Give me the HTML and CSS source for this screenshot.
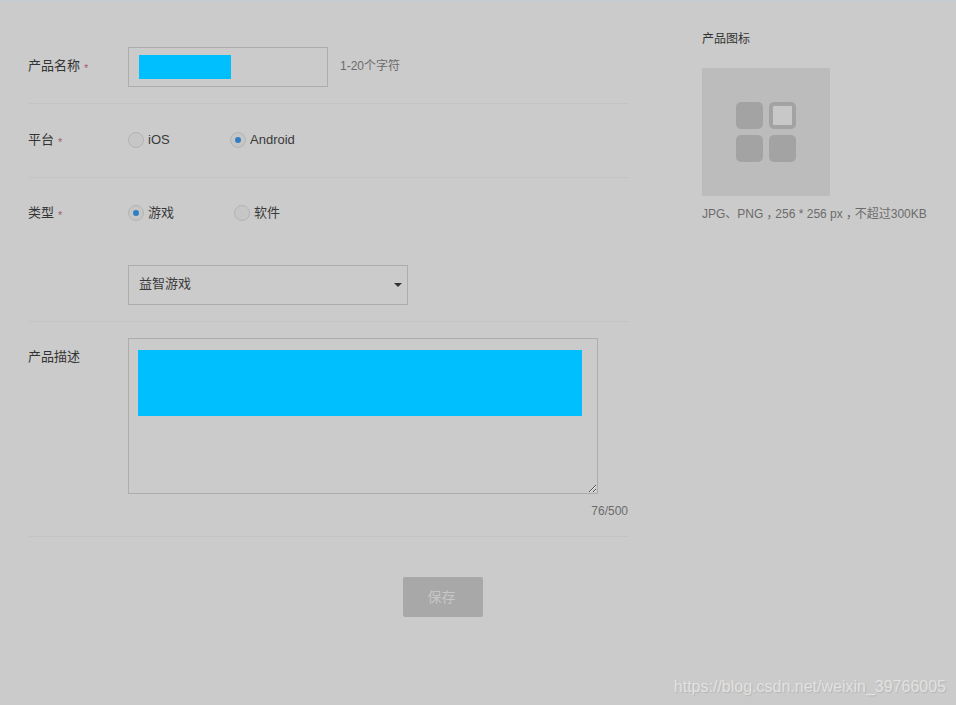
FILE: index.html
```html
<!DOCTYPE html>
<html lang="zh-CN">
<head>
<meta charset="utf-8">
<title>产品信息</title>
<link rel="stylesheet" href="styles.css">
</head>
<body>
<main class="page">
  <form class="form">
    <div class="row row-name">
      <div class="label">产品名称<span class="star">*</span></div>
      <div class="field field-inline">
        <div class="input"><span class="mask mask-name"></span></div>
        <span class="hint">1-20个字符</span>
      </div>
    </div>
    <div class="row row-radio">
      <div class="label">平台<span class="star">*</span></div>
      <div class="radios">
        <span class="radio-item platform-ios"><i class="radio"></i>iOS</span>
        <span class="radio-item"><i class="radio on"></i>Android</span>
      </div>
    </div>
    <div class="row row-type">
      <div class="label">类型<span class="star">*</span></div>
      <div class="field">
        <div class="radios">
          <span class="radio-item type-game"><i class="radio on"></i>游戏</span>
          <span class="radio-item"><i class="radio"></i>软件</span>
        </div>
        <div class="select">益智游戏<i class="caret"></i></div>
      </div>
    </div>
    <div class="row row-desc">
      <div class="label label-desc">产品描述</div>
      <div class="field">
        <div class="area-wrap">
          <textarea class="area" aria-label="产品描述"></textarea>
          <span class="mask mask-desc"></span>
        </div>
        <div class="counter">76/500</div>
      </div>
    </div>
    <div class="actions"><button type="button" class="save">保存</button></div>
  </form>
  <aside class="side">
    <div class="side-title">产品图标</div>
    <div class="icon-box">
      <svg width="60" height="60" viewBox="0 0 60 60" aria-hidden="true">
        <rect x="0" y="0" width="27" height="27" rx="5" fill="#a3a3a3"/>
        <rect x="35" y="2" width="23" height="23" rx="3" fill="#c8c8c8" stroke="#a3a3a3" stroke-width="4"/>
        <rect x="0" y="33" width="27" height="27" rx="5" fill="#a3a3a3"/>
        <rect x="33" y="33" width="27" height="27" rx="5" fill="#a3a3a3"/>
      </svg>
    </div>
    <div class="caption">JPG、PNG<span class="comma" lang="zh-TW">，</span>256 * 256 px<span class="comma" lang="zh-TW">，</span>不超过300KB</div>
  </aside>
</main>
<div class="watermark">https://blog.csdn.net/weixin_39766005</div>
</body>
</html>
```
FILE: styles.css
```css
* { box-sizing: border-box; }
html, body { margin: 0; height: 100%; }
body {
  background: #cbcbcb;
  border-top: 1px solid #c4cad6;
  color: #333;
  font: 13px/20px "Liberation Sans", "Noto Sans CJK SC", sans-serif;
  overflow: hidden;
}
.page { display: flex; padding-left: 28px; }
.form { width: 601px; flex: none; }
.row { display: flex; border-bottom: 1px solid #c4c4c4; }
.label { width: 100px; flex: none; color: #333; }
.star { color: #a5606b; font-size: 11px; line-height: 0; margin-left: 4px; vertical-align: -2px; }
.field { flex: 1; min-width: 0; }
.field-inline { display: flex; align-items: center; }

.row-name { padding: 46px 0 16px; align-items: center; }
.row-name .label { padding-bottom: 2px; }
.input {
  position: relative;
  width: 200px;
  height: 40px;
  border: 1px solid #adadad;
}
.mask { position: absolute; background: #00bfff; }
.mask-name { left: 10px; top: 7px; width: 92px; height: 24px; }
.hint { margin-left: 12px; padding-bottom: 2px; font-size: 12px; color: #6b6b6b; }

.row-radio { padding: 26px 0 27px; align-items: center; }
.radios { display: flex; align-items: center; height: 20px; }
.radio-item { display: inline-flex; align-items: center; color: #3a3a3a; }
.platform-ios { width: 102px; }
.type-game { width: 106px; }
.radio {
  width: 16px;
  height: 16px;
  margin-right: 4px;
  border: 1px solid #b4b4b4;
  border-radius: 50%;
  background: #c6c6c6;
  display: flex;
  align-items: center;
  justify-content: center;
}
.radio.on::after {
  content: "";
  width: 6px;
  height: 6px;
  border-radius: 50%;
  background: #2f7fc4;
}

.row-type { padding-top: 25px; padding-bottom: 16px; }
.select {
  position: relative;
  width: 280px;
  height: 40px;
  margin-top: 42px;
  padding: 8px 10px;
  border: 1px solid #adadad;
  color: #3a3a3a;
}
.caret {
  position: absolute;
  right: 5px;
  top: 17px;
  border: 4px solid transparent;
  border-top: 4px solid #333;
  border-bottom: 0;
}

.row-desc { padding-top: 16px; padding-bottom: 15px; }
.label-desc { padding-top: 9px; }
.area-wrap { position: relative; width: 470px; height: 156px; }
.area {
  display: block;
  width: 470px;
  height: 156px;
  margin: 0;
  border: 1px solid #adadad;
  background: transparent;
  outline: 0;
  resize: both;
}
.mask-desc { left: 10px; top: 12px; width: 444px; height: 66px; }
.counter { margin: 7px 1px 0 0; text-align: right; font-size: 12px; line-height: 20px; color: #6b6b6b; }

.actions { padding: 40px 0 0 375px; }
.save {
  display: block;
  width: 80px;
  height: 40px;
  padding: 0 3px 2px 0;
  border: 0;
  border-radius: 2px;
  background: #a8a8a8;
  color: #c6c6c6;
  font: 14px "Liberation Sans", "Noto Sans CJK SC", sans-serif;
}

.side { margin-left: 73px; padding-top: 28px; }
.side-title { font-size: 12px; line-height: 20px; color: #333; }
.icon-box {
  width: 128px;
  height: 128px;
  margin-top: 19px;
  background: #bcbcbc;
  display: flex;
  align-items: center;
  justify-content: center;
}
.icon-box svg { display: block; }
.caption { margin-top: 8px; font-size: 12px; line-height: 20px; color: #6b6b6b; white-space: nowrap; }
.comma { font-family: "Noto Sans CJK TC", sans-serif; line-height: 0; vertical-align: -4px; }

.watermark {
  position: absolute;
  right: 10px;
  top: 677px;
  color: #e2e2e2;
  font-size: 16px;
  line-height: 20px;
  text-shadow: 1px 1px 1px #b5b5b5;
}
```
